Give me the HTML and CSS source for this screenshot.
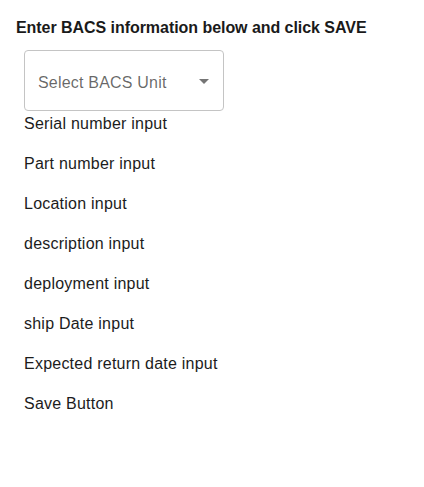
FILE: index.html
```html
<!DOCTYPE html>
<html lang="en">
  <head>
    <title>BACS Entry</title>
    <meta charset="UTF-8" />
    <link rel="stylesheet" href="styles.css">
  </head>
  <body>
    <div id="bacs-form">
      <h3>Enter BACS information below and click SAVE</h3>
      <div class="fields">
        <div class="select-box">
          <span class="placeholder">Select BACS Unit</span>
          <svg class="arrow" viewBox="0 0 24 24" width="24" height="24">
            <path d="M7 10l5 5 5-5z" fill="rgba(0,0,0,0.54)" />
          </svg>
        </div>
        <p>Serial number input</p>
        <p>Part number input</p>
        <p>Location input</p>
        <p>description input</p>
        <p>deployment input</p>
        <p>ship Date input</p>
        <p>Expected return date input</p>
        <p>Save Button</p>
      </div>
    </div>
  </body>
</html>
```

FILE: styles.css
```css
html,
body {
  margin: 0;
  padding: 0;
  background: #fff;
  color: #1c1c1c;
  font-family: "Liberation Sans", Arial, sans-serif;
}

#bacs-form {
  padding: 16px 16px 0 16px;
}

#bacs-form h3 {
  margin: 0;
  font-size: 16px;
  line-height: 24px;
  font-weight: bold;
  color: #1a1a1a;
  letter-spacing: -0.05px;
}

.fields {
  margin-left: 8px;
  padding-top: 10px;
}

.select-box {
  box-sizing: border-box;
  width: 200px;
  height: 61px;
  border: 1px solid #c4c4c4;
  border-radius: 4px;
  display: flex;
  align-items: center;
  justify-content: space-between;
  padding: 5px 7px 0 13px;
}

.select-box .placeholder {
  font-size: 16px;
  color: rgba(0, 0, 0, 0.6);
  letter-spacing: 0.2px;
}

.select-box .arrow {
  display: block;
  margin-top: -5px;
}

.fields p {
  margin: 0 0 16px 0;
  padding-top: 1px;
  height: 23px;
  font-size: 16px;
  line-height: 24px;
  letter-spacing: 0.23px;
}
```
